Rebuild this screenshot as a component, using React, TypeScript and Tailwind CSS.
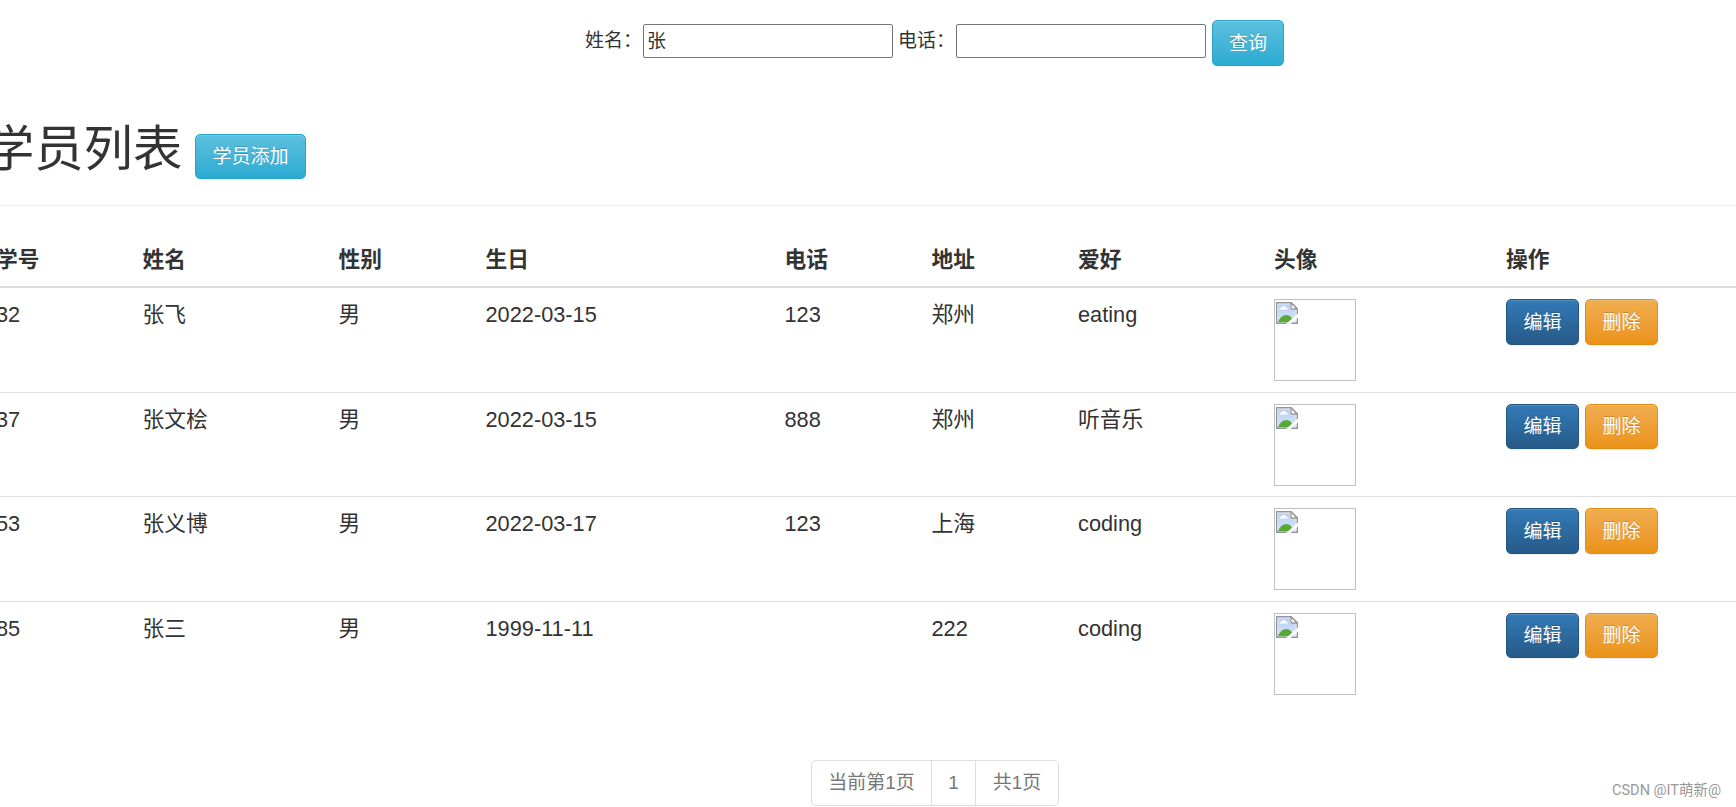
import React, { useState } from "react";
import clsx from "clsx";

interface Student {
  id: number;
  name: string;
  sex: string;
  birthday: string;
  phone: string;
  address: string;
  hobby: string;
}

const students: Student[] = [
  { id: 32, name: "张飞", sex: "男", birthday: "2022-03-15", phone: "123", address: "郑州", hobby: "eating" },
  { id: 37, name: "张文桧", sex: "男", birthday: "2022-03-15", phone: "888", address: "郑州", hobby: "听音乐" },
  { id: 53, name: "张义博", sex: "男", birthday: "2022-03-17", phone: "123", address: "上海", hobby: "coding" },
  { id: 85, name: "张三", sex: "男", birthday: "1999-11-11", phone: "", address: "222", hobby: "coding" },
];

const headers = ["学号", "姓名", "性别", "生日", "电话", "地址", "爱好", "头像", "操作"];

const columns =
  "grid grid-cols-[146.5px_196px_147px_299px_147px_146.5px_196px_232px_256px]";

const variants = {
  info: "border-[#28a4c9] from-[#5bc0de] to-[#2aabd2]",
  primary: "border-[#245580] from-[#337ab7] to-[#265a88]",
  warning: "border-[#e38d13] from-[#f0ad4e] to-[#eb9316]",
};

interface ButtonProps {
  variant: keyof typeof variants;
  className?: string;
  children: React.ReactNode;
}

const Button: React.FC<ButtonProps> = ({ variant, className, children }) => (
  <button
    type="button"
    className={clsx(
      "flex shrink-0 items-center justify-center rounded-[5px] border bg-linear-to-b text-[19px] leading-none text-white [text-shadow:0_-1px_0_rgba(0,0,0,0.2)] shadow-[inset_0_1px_0_rgba(255,255,255,0.15),0_1px_1px_rgba(0,0,0,0.075)]",
      variants[variant],
      className
    )}
  >
    {children}
  </button>
);

// Placeholder for an avatar that could not be loaded
const BrokenAvatar = () => (
  <div className="h-[82px] w-[82px] border border-[#c0c0c0] pt-[2px] pl-px">
    <svg width="22" height="22" viewBox="0 0 22 22">
      <defs>
        <linearGradient id="sky" x1="0" y1="0" x2="0" y2="1">
          <stop offset="0" stopColor="#b9cff7" />
          <stop offset="1" stopColor="#d5e2fb" />
        </linearGradient>
      </defs>
      <path d="M.7.7H15L21.3 7v14.3H.7z" fill="#fff" stroke="#959595" strokeWidth="1.4" />
      <path d="M2.2 2.2H14V8h5.800v11.800H2.200z" fill="url(#sky)" />
      <path d="M3.500 7.500q.2-2 2-2 .7-2 2.500-1.500 1.800.5 2 1.500 1.600 0 1.700 2z" fill="#fff" />
      <path d="M1.800 20.300Q5 13 10.500 13q5 0 7 7.300z" fill="#57a935" />
      <path d="M15 .7V7h6.300z" fill="#fff" stroke="#959595" strokeWidth="1.3" />
      <path d="M22 11.500 10 22h4.500l7.500-6.500z" fill="#fff" />
    </svg>
  </div>
);

const App: React.FC = () => {
  const [name, setName] = useState("张");
  const [phone, setPhone] = useState("");

  return (
    <div className="flex h-[807px] w-full flex-col overflow-hidden bg-white font-['Liberation_Sans','Noto_Sans_CJK_SC',sans-serif] text-[#333]">
      {/* Search form */}
      <form className="flex h-[66px] shrink-0 items-start pt-5 pl-[585px] text-[19px] leading-[27px]">
        <label className="mt-[7px] w-[58px] shrink-0 whitespace-nowrap">姓名：</label>
        <input
          value={name}
          onChange={(e) => setName(e.target.value)}
          className="mt-1 h-[34px] w-[250px] shrink-0 rounded-[2px] border border-[#767676] px-[3px] pb-[3px] outline-none"
        />
        <label className="mt-[7px] ml-[5px] w-[58px] shrink-0 whitespace-nowrap">电话：</label>
        <input
          value={phone}
          onChange={(e) => setPhone(e.target.value)}
          className="mt-1 h-[34px] w-[250px] shrink-0 rounded-[2px] border border-[#767676] px-[3px] pb-[3px] outline-none"
        />
        <Button variant="info" className="ml-[6px] h-[46px] w-[72px]">
          查询
        </Button>
      </form>

      {/* Page header */}
      <div className="-ml-[15px] flex h-[140px] shrink-0 items-start border-b border-[#eee] pt-[54px]">
        <h1 className="w-[210px] shrink-0 pt-[2px] text-[49.3px] leading-[54px] whitespace-nowrap">学员列表</h1>
        <Button variant="info" className="mt-[14px] h-[45px] w-[111px]">
          学员添加
        </Button>
      </div>

      {/* Student table */}
      <div className="-ml-[15px] w-[1766px] shrink-0 text-[21.76px] leading-[31px]">
        <div className={clsx(columns, "h-[82.4px] border-b-2 border-[#ddd] pt-[38px] font-bold")}>
          {headers.map((header) => (
            <div key={header} className="pl-[11px]">
              {header}
            </div>
          ))}
        </div>
        {students.map((s, i) => (
          <div
            key={s.id}
            className={clsx(
              columns,
              "pt-[10.9px]",
              i === 0 ? "h-[103.5px]" : "h-[104.5px] border-t border-[#ddd]"
            )}
          >
            <div className="pl-[11px]">{s.id}</div>
            <div className="pl-[11px]">{s.name}</div>
            <div className="pl-[11px]">{s.sex}</div>
            <div className="pl-[11px]">{s.birthday}</div>
            <div className="pl-[11px]">{s.phone}</div>
            <div className="pl-[11px]">{s.address}</div>
            <div className="pl-[11px]">{s.hobby}</div>
            <div className="pl-[11px]">
              <BrokenAvatar />
            </div>
            <div className="flex items-start gap-[6px] pl-[11px]">
              <Button variant="primary" className="h-[45.6px] w-[73px]">
                编辑
              </Button>
              <Button variant="warning" className="h-[45.6px] w-[73px]">
                删除
              </Button>
            </div>
          </div>
        ))}
      </div>

      {/* Pagination */}
      <div className="flex shrink-0 items-start justify-between pt-[54.6px] pr-[15px] pl-[811px]">
        <ul className="flex h-[46px] rounded-[5px] border border-[#ddd] text-[19px] leading-[43px] text-[#777]">
          <li className="w-[120px] border-r border-[#ddd] text-center">当前第1页</li>
          <li className="w-[44px] border-r border-[#ddd] text-center">1</li>
          <li className="w-[82px] text-center">共1页</li>
        </ul>
        <span className="mt-[21px] font-[Roboto,'Noto_Sans_CJK_SC',sans-serif] text-[14.5px] leading-5 whitespace-nowrap text-[#999]">
          CSDN @IT萌新@
        </span>
      </div>
    </div>
  );
};

export default App;
